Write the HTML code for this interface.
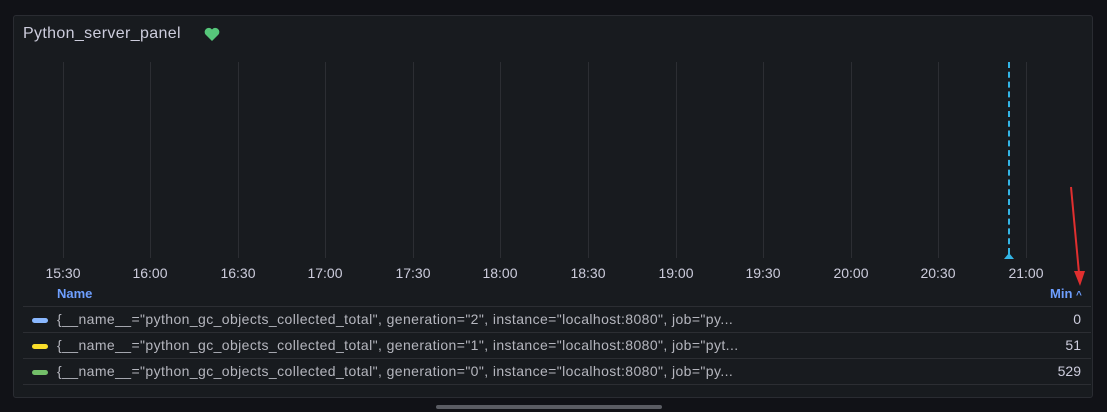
<html><head><style>
body{margin:0;width:1107px;height:412px;background:#111217;font-family:"Liberation Sans",sans-serif;position:relative;overflow:hidden}
.panel{position:absolute;left:13px;top:15px;width:1080px;height:383px;background:#181b1f;border:1px solid #2a2c32;border-radius:3px;box-sizing:border-box}
.t{position:absolute;color:#ccccdc;font-size:16px;letter-spacing:0.35px}
.g{position:absolute;top:62px;height:196px;width:1px;background:#2c2e33}
.x{position:absolute;top:265px;width:60px;margin-left:-30px;text-align:center;color:#ccccdc;font-size:14px}
.row{position:absolute;left:23px;width:1068px;height:26px;border-bottom:1px solid #2c2e33;box-sizing:border-box;color:#b5b6be;font-size:14px;letter-spacing:0.4px}
.row span.c{position:absolute;left:9px;top:11px;width:16px;height:5px;border-radius:3px}
.row span.n{position:absolute;left:34px;top:4px}
.row span.v{position:absolute;right:10px;top:4px;color:#ccccdc;letter-spacing:0}
</style></head><body>
<div class="panel"></div>
<div class="t" style="left:23px;top:25px">Python_server_panel</div>
<svg style="position:absolute;left:204px;top:27px" width="16" height="15" viewBox="0 0 16 14"><path d="M8 13.5L1.5 7A3.8 3.8 0 0 1 8 2a3.8 3.8 0 0 1 6.5 5z" fill="#56c77a"/></svg>
<div class="g" style="left:63px"></div><div class="g" style="left:150px"></div><div class="g" style="left:238px"></div><div class="g" style="left:325px"></div><div class="g" style="left:413px"></div><div class="g" style="left:500px"></div><div class="g" style="left:588px"></div><div class="g" style="left:676px"></div><div class="g" style="left:763px"></div><div class="g" style="left:851px"></div><div class="g" style="left:938px"></div><div class="g" style="left:1026px"></div>
<div style="position:absolute;left:1008px;top:62px;height:192px;border-left:2px dashed #33b5e5"></div>
<svg style="position:absolute;left:1004px;top:253px" width="10" height="6"><path d="M5 0L10 6H0z" fill="#33b5e5"/></svg>
<div class="x" style="left:63px">15:30</div><div class="x" style="left:150px">16:00</div><div class="x" style="left:238px">16:30</div><div class="x" style="left:325px">17:00</div><div class="x" style="left:413px">17:30</div><div class="x" style="left:500px">18:00</div><div class="x" style="left:588px">18:30</div><div class="x" style="left:676px">19:00</div><div class="x" style="left:763px">19:30</div><div class="x" style="left:851px">20:00</div><div class="x" style="left:938px">20:30</div><div class="x" style="left:1026px">21:00</div>
<div style="position:absolute;left:57px;top:286px;color:#6e9fff;font-size:13px;font-weight:bold">Name</div>
<div style="position:absolute;left:1050px;top:286px;color:#6e9fff;font-size:13px;font-weight:bold">Min <span style="font-size:10px">^</span></div>
<div style="position:absolute;left:23px;top:306px;width:1068px;height:1px;background:#2c2e33"></div>
<svg style="position:absolute;left:1060px;top:185px" width="30" height="106"><path d="M11 2L19 88" stroke="#e02f2f" stroke-width="2"/><path d="M14 86L25 86L20 101z" fill="#e02f2f"/></svg>
<div class="row" style="top:307px"><span class="c" style="background:#8ab8ff"></span><span class="n">{__name__="python_gc_objects_collected_total", generation="2", instance="localhost:8080", job="py...</span><span class="v">0</span></div>
<div class="row" style="top:333px"><span class="c" style="background:#fade2a"></span><span class="n">{__name__="python_gc_objects_collected_total", generation="1", instance="localhost:8080", job="pyt...</span><span class="v">51</span></div>
<div class="row" style="top:359px"><span class="c" style="background:#73bf69"></span><span class="n">{__name__="python_gc_objects_collected_total", generation="0", instance="localhost:8080", job="py...</span><span class="v">529</span></div>
<div style="position:absolute;left:436px;top:405px;width:226px;height:4px;border-radius:2px;background:#5a5c63"></div>
</body></html>
